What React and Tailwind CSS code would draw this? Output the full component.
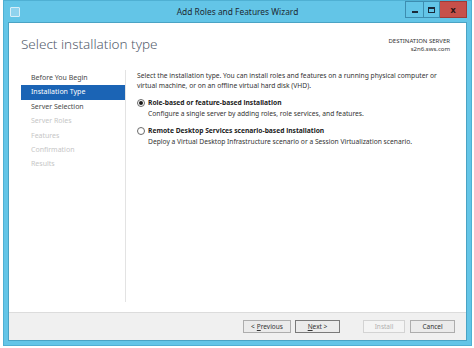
import React from 'react';

const font = { fontFamily: '"Noto Sans", "Open Sans", sans-serif' };

export default function App() {
  return (
    <div
      className="w-[474px] h-[348px] bg-white pl-[3px] pr-[2px] pb-[2px] overflow-hidden"
      style={font}
    >
      <div className="h-full flex flex-col bg-[#63c5e7] border border-[#4fb0d3]">
        <TitleBar />
        <div className="flex-1 mx-[4px] mb-[4px] flex flex-col bg-white border border-[#4aa3c4]">
          <Header />
          <div className="flex-1 flex">
            <NavList />
            <div className="w-px bg-[#e3e3e3] mt-[7px] mb-[10px]" />
            <Content />
          </div>
          <Footer />
        </div>
      </div>
    </div>
  );
}

function TitleBar() {
  return (
    <div className="h-[21px] grid grid-cols-[1fr_auto_1fr] items-start">
      <div className="w-[10px] h-[10px] ml-[6px] mt-[6px] border border-[#d7eef8] rounded-[1px] bg-[#8fd3ee]" />
      <div className="text-center text-[8.4px] leading-[21px] text-[#1d2a33]">
        Add Roles and Features Wizard
      </div>
      <div className="flex justify-end mr-[4px]">
        <div className="w-[18px] h-[17px] border border-[#3d8db0] border-r-0 flex items-center justify-center">
          <div className="w-[6px] h-[2px] bg-[#1a2a3a] mt-[4px]" />
        </div>
        <div className="w-[17px] h-[17px] border border-[#3d8db0] flex items-center justify-center">
          <div className="w-[7px] h-[6px] border-[1.5px] border-t-[2px] border-[#1a2a3a]" />
        </div>
        <div className="w-[27px] h-[17px] bg-[#c7504a] border border-[#a03a36] border-l-0 flex items-center justify-center text-[9px] font-bold text-[#2a1515]">
          x
        </div>
      </div>
    </div>
  );
}

function Header() {
  return (
    <div className="h-[40px] flex justify-between items-start">
      <div className="pl-[12px] pt-[12px] text-[13.5px] font-light leading-[18px] text-[#55606e]">
        Select installation type
      </div>
      <div className="pr-[16px] pt-[14px] text-right text-[6px] leading-[8px] text-[#333]">
        <div>DESTINATION SERVER</div>
        <div>s2n6.sws.com</div>
      </div>
    </div>
  );
}

const navItems = [
  { label: 'Before You Begin', state: 'done' },
  { label: 'Installation Type', state: 'active' },
  { label: 'Server Selection', state: 'done' },
  { label: 'Server Roles', state: 'off' },
  { label: 'Features', state: 'off' },
  { label: 'Confirmation', state: 'off' },
  { label: 'Results', state: 'off' },
];

function NavList() {
  return (
    <div className="w-[116px] pt-[8px] pl-[12px]">
      {navItems.map((item) => (
        <div
          key={item.label}
          className={
            'h-[14.4px] pl-[10px] text-[7px] leading-[14.4px] ' +
            (item.state === 'active'
              ? 'bg-[#1b64b5] text-white'
              : item.state === 'done'
              ? 'text-[#4a4a4a]'
              : 'text-[#c6c6c6]')
          }
        >
          {item.label}
        </div>
      ))}
    </div>
  );
}

function Radio({ checked }) {
  return (
    <div className="w-[8px] h-[8px] rounded-full border border-[#6a6a6a] bg-white flex items-center justify-center shrink-0">
      {checked && <div className="w-[4px] h-[4px] rounded-full bg-[#1a1a1a]" />}
    </div>
  );
}

function Content() {
  return (
    <div className="flex-1 pl-[11px] pt-[8px] text-[6.7px] text-[#333]">
      <div className="leading-[10px] w-[320px]">
        Select the installation type. You can install roles and features on a running physical computer or
        virtual machine, or on an offline virtual hard disk (VHD).
      </div>
      <div className="mt-[7px] flex items-center gap-[3px] leading-[10px]">
        <Radio checked />
        <span className="font-bold text-[#222]">Role-based or feature-based installation</span>
      </div>
      <div className="pl-[11px] leading-[10px] mt-[1px]">
        Configure a single server by adding roles, role services, and features.
      </div>
      <div className="mt-[7px] flex items-center gap-[3px] leading-[10px]">
        <Radio />
        <span className="font-bold text-[#222]">Remote Desktop Services scenario-based installation</span>
      </div>
      <div className="pl-[11px] leading-[10px] mt-[1px]">
        Deploy a Virtual Desktop Infrastructure scenario or a Session Virtualization scenario.
      </div>
    </div>
  );
}

function Footer() {
  const btn =
    'h-[13px] flex items-center justify-center text-[6.5px] bg-[#ebebeb] border ';
  return (
    <div className="h-[28px] bg-[#f0f0f0] border-t border-[#dcdcdc] flex items-center justify-end pr-[11px]">
      <div className={btn + 'w-[48px] border-[#adadad] text-[#333]'}>
        &lt; <span className="underline ml-[2px]">P</span>revious
      </div>
      <div className={btn + 'w-[45px] ml-[4px] border-[#7a7a7a] text-[#333]'}>
        <span className="underline">N</span>ext &gt;
      </div>
      <div className={btn + 'w-[42px] ml-[23px] border-[#d3d3d3] bg-[#f4f4f4] text-[#b0b0b0]'}>
        Install
      </div>
      <div className={btn + 'w-[45px] ml-[5px] border-[#adadad] text-[#333]'}>
        Cancel
      </div>
    </div>
  );
}
